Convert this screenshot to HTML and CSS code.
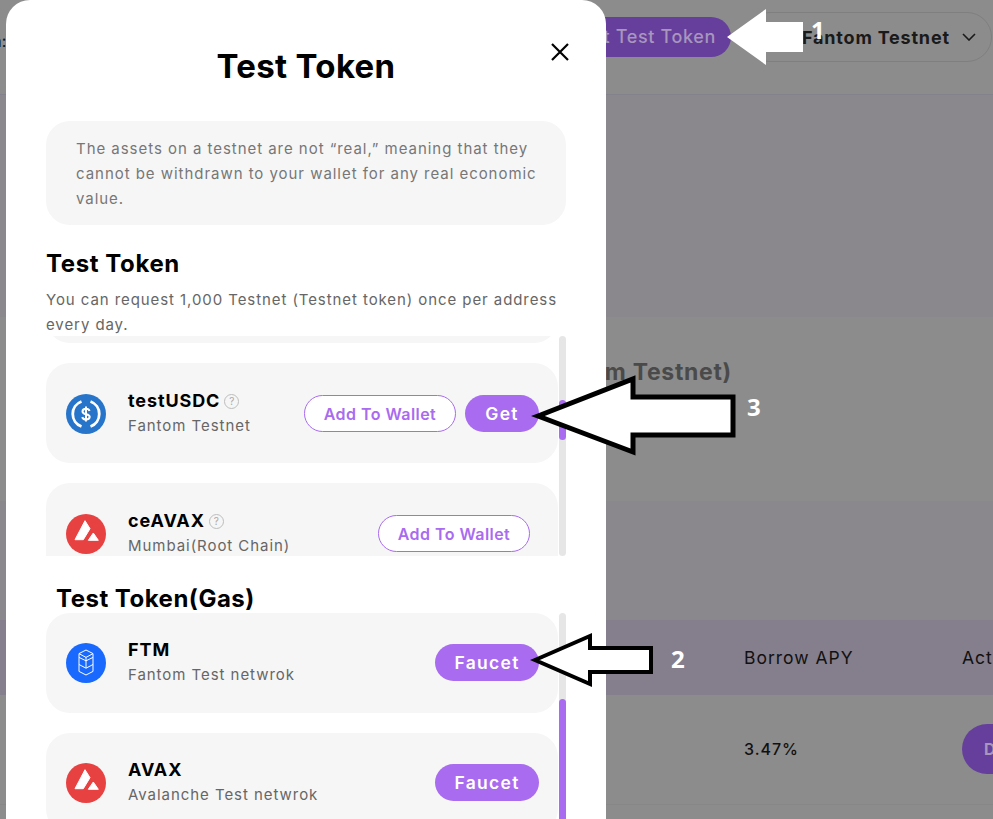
FILE: index.html
```html
<!DOCTYPE html>
<html lang="en">
<head>
<meta charset="utf-8">
<title>Test Token</title>
<link rel="stylesheet" href="styles.css">
</head>
<body>
<div class="page">
  <header class="topbar">
    <span class="brand">Main:</span>
    <span class="get-pill">Get Test Token</span>
    <span class="net-pill">Fantom Testnet
      <svg class="chev" viewBox="0 0 14 8" width="14" height="8"><path d="M1 1l6 6 6-6" fill="none" stroke="#1a1a1a" stroke-width="1.6"/></svg>
    </span>
  </header>
  <section class="band band-a"></section>
  <section class="band band-b"><h2 class="bg-title">Markets (Fantom Testnet)</h2></section>
  <section class="band band-c"></section>
  <div class="thead"><span>Borrow APY</span><span>Action</span></div>
  <div class="trow"><span>3.47%</span><span class="do-btn">Do</span></div>

  <div class="modal">
    <button class="close" aria-label="Close">
      <svg viewBox="0 0 18 18" width="18" height="18"><path d="M1 1l16 16M17 1L1 17" stroke="#000" stroke-width="2.2" fill="none"/></svg>
    </button>
    <h1 class="modal-title">Test Token</h1>
    <p class="note">The assets on a testnet are not “real,” meaning that they<br>cannot be withdrawn to your wallet for any real economic<br>value.</p>
    <h3 class="sec-title">Test Token</h3>
    <p class="sec-sub">You can request 1,000 Testnet (Testnet token) once per address<br>every day.</p>

    <div class="scroller scroller-a">
      <div class="list list-a">
        <div class="card"></div>
        <div class="card">
          <svg class="coin" viewBox="0 0 40 40"><circle cx="20" cy="20" r="20" fill="#2775ca"/><path d="M15.500 7.500a13.300 13.300 0 0 0 0 25M24.500 7.500a13.300 13.300 0 0 1 0 25" fill="none" stroke="#fff" stroke-width="2.800"/><path d="M23.500 17c-.4-1.500-1.700-2.200-3.500-2.200-2.200 0-3.500 1-3.500 2.600 0 3.900 7.200 1.700 7.200 5.400 0 1.700-1.500 2.700-3.700 2.700-2 0-3.300-.8-3.800-2.400M20 12.500v15" fill="none" stroke="#fff" stroke-width="2"/></svg>
          <div class="info">
            <div class="name">testUSDC<span class="help">?</span></div>
            <div class="sub">Fantom Testnet</div>
          </div>
          <span class="btn outline">Add To Wallet</span>
          <span class="btn fill get">Get</span>
        </div>
        <div class="card">
          <svg class="coin" viewBox="0 0 40 40"><circle cx="20" cy="20" r="20" fill="#e84142"/><path d="M19 6.700L9 25.700h8.300L24 14.700z" fill="#fff" stroke="#fff" stroke-linejoin="round"/><path d="M27.300 19l-5 7.300h10z" fill="#fff" stroke="#fff" stroke-linejoin="round"/></svg>
          <div class="info">
            <div class="name">ceAVAX<span class="help">?</span></div>
            <div class="sub">Mumbai(Root Chain)</div>
          </div>
          <span class="btn outline solo">Add To Wallet</span>
        </div>
      </div>
      <div class="track"><div class="thumb thumb-a"></div></div>
    </div>

    <h3 class="sec-title gas">Test Token(Gas)</h3>

    <div class="scroller scroller-b">
      <div class="list">
        <div class="card">
          <svg class="coin" viewBox="0 0 40 40"><circle cx="20" cy="20" r="20" fill="#1969ff"/><path d="M20 7l7 3.600v17.800L20 32l-7-3.600V10.600zM13 10.600l7 3.800 7-3.800M20 14.400v3.400M13 14.400l7 3.400 7-3.400M13 21.500l7 3.700 7-3.700M20 17.800v7.400" fill="none" stroke="#fff" stroke-width="1" stroke-linejoin="round"/></svg>
          <div class="info">
            <div class="name">FTM</div>
            <div class="sub">Fantom Test netwrok</div>
          </div>
          <span class="btn fill">Faucet</span>
        </div>
        <div class="card">
          <svg class="coin" viewBox="0 0 40 40"><circle cx="20" cy="20" r="20" fill="#e84142"/><path d="M19 6.700L9 25.700h8.300L24 14.700z" fill="#fff" stroke="#fff" stroke-linejoin="round"/><path d="M27.300 19l-5 7.300h10z" fill="#fff" stroke="#fff" stroke-linejoin="round"/></svg>
          <div class="info">
            <div class="name">AVAX</div>
            <div class="sub">Avalanche Test netwrok</div>
          </div>
          <span class="btn fill">Faucet</span>
        </div>
      </div>
      <div class="track"><div class="thumb thumb-b"></div></div>
    </div>
  </div>

  <svg class="arrows" viewBox="0 0 993 819" width="993" height="819">
    <polygon points="727,37 766,9 766,22 803,22 803,52 766,52 766,65" fill="#fff"/>
    <polygon points="538,416 633,379 633,397 733,397 733,435 633,435 633,452" fill="#fff" stroke="#000" stroke-width="5" stroke-linejoin="miter"/>
    <polygon points="535,660 590,636 590,648 651,648 651,672 590,672 590,684" fill="#fff" stroke="#000" stroke-width="4" stroke-linejoin="miter"/>
  </svg>
  <span class="mark mark-1">1</span>
  <span class="mark mark-2">2</span>
  <span class="mark mark-3">3</span>
</div>
</body>
</html>
```
FILE: styles.css
```css
* { box-sizing: border-box; }
html, body { margin: 0; padding: 0; }
body { font-family: Inter, "Liberation Sans", sans-serif; background: #8c8c8c; }
.page { position: relative; width: 993px; height: 819px; overflow: hidden; background: #8c8c8c; }

.topbar { height: 95px; border-bottom: 1px solid #83818c; display: flex; align-items: flex-start; padding: 12px 1px 0 0; }
.brand { margin-left: -35px; margin-right: auto; margin-top: 19px; font-size: 16px; color: #111; white-space: nowrap; }
.get-pill { height: 40px; margin-top: 5px; margin-right: 14px; padding: 0 15px 0 40px; border-radius: 20px; background: #663f9c; color: #a896bd; font-size: 18px; font-weight: 500; letter-spacing: .65px; line-height: 40px; white-space: nowrap; }
.net-pill { width: 247px; height: 50px; border: 1px solid #7f7f7f; border-radius: 25px; padding-left: 56px; display: flex; align-items: center; font-size: 18px; font-weight: 700; letter-spacing: .8px; color: #1a1a1a; white-space: nowrap; }
.chev { margin-left: 12px; }

.band { width: 100%; }
.band-a { height: 222px; background: #8a888c; }
.band-b { height: 184px; background: #8c8c8c; display: flex; justify-content: flex-end; padding: 43px 261px 0 0; }
.band-c { height: 119px; background: #8a888c; }
.bg-title { margin: 0; font-size: 23px; line-height: 24px; font-weight: 700; color: #4a4a4a; letter-spacing: .7px; white-space: nowrap; }

.thead, .trow { display: grid; grid-template-columns: 218px 31px; justify-content: end; align-items: center; color: #111; white-space: nowrap; }
.thead { height: 75px; padding-bottom: 1px; background: #857e8c; font-size: 17.500px; letter-spacing: 1px; }
.trow { height: 110px; padding-bottom: 1px; border-bottom: 1px solid #878787; font-size: 16px; font-weight: 500; letter-spacing: .95px; }
.do-btn { width: 60px; height: 50px; border-radius: 25px; background: #663f9c; color: #a896bd; padding-left: 22px; line-height: 50px; font-weight: 700; }

.modal { position: absolute; left: 6px; top: 0; width: 600px; height: 840px; background: #fff; border-radius: 24px 24px 0 0; padding: 0 40px; }
.close { position: absolute; left: 545px; top: 43px; width: 18px; height: 18px; padding: 0; border: 0; background: none; display: block; }
.close svg { display: block; }
.modal-title { margin: 0; padding-top: 47px; height: 121px; font-size: 33px; line-height: 38px; font-weight: 700; text-align: center; color: #000; letter-spacing: .3px; }
.note { margin: 0; width: 520px; height: 104px; padding: 15px 30px 0; border-radius: 24px; background: #f6f6f6; font-size: 15px; line-height: 25px; color: #777; letter-spacing: .96px; white-space: nowrap; }
.sec-title { margin: 0; font-size: 24px; line-height: 30px; font-weight: 700; color: #000; letter-spacing: .6px; }
.note + .sec-title { margin-top: 24px; }
.sec-sub { margin: 8px 0 0; height: 50px; font-size: 15px; line-height: 25px; color: #666; letter-spacing: .92px; white-space: nowrap; }
.sec-title.gas { margin: 28px 0 0 10px; height: 29px; letter-spacing: .5px; }

.scroller { display: flex; justify-content: space-between; width: 520px; overflow: hidden; }
.scroller-a { height: 220px; margin-top: -1px; }
.scroller-b { height: 230px; }
.list { width: 512px; display: flex; flex-direction: column; gap: 20px; flex: none; }
.list-a { margin-top: -93px; }
.card { flex: none; height: 100px; border-radius: 24px; background: #f6f6f6; display: flex; align-items: center; padding: 0 19px 1px 20px; }
.list-a .card { padding: 1px 19px 0 20px; }
.coin { width: 40px; height: 40px; flex: none; margin-right: 22px; }
.info { margin-right: auto; }
.name { display: flex; align-items: center; font-size: 18px; line-height: 24px; font-weight: 700; color: #000; letter-spacing: .9px; }
.sub { margin-top: 1px; font-size: 15px; line-height: 24px; color: #666; letter-spacing: .95px; white-space: nowrap; }
.help { width: 15px; height: 15px; margin-left: 4px; border: 1px solid #bdbdbd; border-radius: 50%; font-size: 10px; line-height: 13px; font-weight: 400; color: #aaa; text-align: center; letter-spacing: 0; }
.btn { height: 37px; border-radius: 19px; display: flex; align-items: center; justify-content: center; font-size: 17px; font-weight: 600; white-space: nowrap; letter-spacing: .4px; }
.outline { width: 152px; border: 1px solid #a96bef; background: #fff; color: #a96bef; font-size: 16px; letter-spacing: .45px; }
.outline.solo { margin-right: 9px; }
.fill { width: 104px; background: #a96bef; color: #fff; font-size: 17.500px; letter-spacing: 1.300px; }
.fill.get { width: 74px; margin-left: 9px; }
.track { width: 7px; flex: none; height: 100%; border-radius: 4px; background: #e6e6e6; overflow: hidden; }
.thumb { width: 100%; border-radius: 4px; background: #a96bef; }
.thumb-a { margin-top: 64px; height: 40px; }
.thumb-b { margin-top: 86px; height: 200px; }

.arrows { position: absolute; left: 0; top: 0; pointer-events: none; }
.mark { position: absolute; font-family: "Open Sans", "DejaVu Sans", sans-serif; font-size: 24px; font-weight: 700; line-height: 28px; color: #fff; }
.mark-1 { left: 811px; top: 16px; }
.mark-2 { left: 671px; top: 645px; }
.mark-3 { left: 747px; top: 393px; }
```
